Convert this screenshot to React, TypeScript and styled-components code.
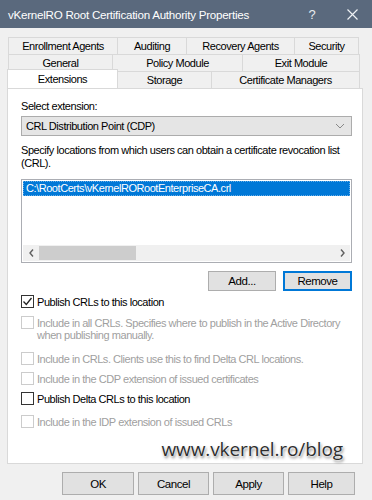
import React from 'react';
import styled, { createGlobalStyle } from 'styled-components';

const GlobalStyle = createGlobalStyle`
  html, body {
    margin: 0;
    padding: 0;
    background: #f0f0f0;
  }
  body {
    font-family: "Liberation Sans", Arial, sans-serif;
    font-size: 11px;
    letter-spacing: -0.45px;
    color: #000;
  }
`;

const Window = styled.div`
  width: 372px;
  height: 500px;
  display: flex;
  flex-direction: column;
  background: #f0f0f0;
  overflow: hidden;
  & * {
    flex-shrink: 0;
  }
`;

const TitleBar = styled.div`
  height: 28px;
  display: flex;
  align-items: center;
  background: #5a697d;
  color: #fff;
  padding-left: 8px;
`;

const Title = styled.span`
  flex: 1;
  font-size: 11.6px;
  letter-spacing: -0.25px;
`;

const TitleButton = styled.span`
  width: 40px;
  display: flex;
  justify-content: center;
  align-items: center;
  font-size: 13px;
  color: #e8ecf0;
`;

const Body = styled.div`
  padding: 9px 9px 0 7px;
  display: flex;
  flex-direction: column;
`;

const TabRow = styled.div<{ $inset?: number }>`
  display: flex;
  height: 17px;
  padding-left: ${(p) => p.$inset ?? 2}px;
  padding-right: ${(p) => p.$inset ?? 2}px;
`;

const Tab = styled.div<{ $w: number; $active?: boolean }>`
  width: ${(p) => p.$w}px;
  box-sizing: border-box;
  display: flex;
  align-items: center;
  justify-content: center;
  border: 1px solid #d9d9d9;
  border-bottom: none;
  margin-left: -1px;
  background: ${(p) => (p.$active ? '#fff' : '#f0f0f0')};
  ${(p) =>
    p.$active &&
    `
    height: 19px;
    margin-top: -2px;
    position: relative;
    z-index: 1;
    margin-left: 0;
  `}
`;

const Panel = styled.div`
  height: 376px;
  box-sizing: border-box;
  background: #fff;
  border: 1px solid #d9d9d9;
  padding: 11px 10px 0 13px;
  display: flex;
  flex-direction: column;
`;

const Label = styled.div<{ $mt?: number }>`
  line-height: 13px;
  margin-top: ${(p) => p.$mt ?? 0}px;
`;

const Combo = styled.div`
  margin-top: 3px;
  height: 20px;
  box-sizing: border-box;
  border: 1px solid #acacac;
  background: #e5e5e5;
  display: flex;
  align-items: center;
  padding: 0 6px 0 4px;
  justify-content: space-between;
`;

const ListBox = styled.div`
  margin-top: 9px;
  height: 84px;
  box-sizing: border-box;
  border: 1px solid #abadb3;
  display: flex;
  flex-direction: column;
  padding: 1px;
`;

const ListItem = styled.div`
  height: 13px;
  line-height: 13px;
  background: #0078d7;
  color: #fff;
  padding-left: 2px;
  border: 1px dotted #66aee8;
`;

const HScroll = styled.div`
  margin-top: auto;
  height: 16px;
  background: #f0f0f0;
  display: flex;
  align-items: center;
`;

const ScrollArrow = styled.div`
  width: 16px;
  display: flex;
  justify-content: center;
  align-items: center;
`;

const ScrollTrack = styled.div`
  flex: 1;
  height: 14px;
  display: flex;
`;

const ScrollThumb = styled.div`
  width: 97px;
  height: 14px;
  background: #cdcdcd;
`;

const ButtonRow = styled.div<{ $mt?: number; $gap?: number }>`
  display: flex;
  justify-content: flex-end;
  gap: ${(p) => p.$gap ?? 7}px;
  margin-top: ${(p) => p.$mt ?? 0}px;
`;

const Button = styled.div<{ $w?: number; $h?: number; $default?: boolean }>`
  width: ${(p) => p.$w ?? 68}px;
  height: ${(p) => p.$h ?? 20}px;
  box-sizing: border-box;
  display: flex;
  align-items: center;
  justify-content: center;
  background: #e1e1e1;
  border: 1px solid ${(p) => (p.$default ? '#0078d7' : '#adadad')};
  box-shadow: ${(p) => (p.$default ? 'inset 0 0 0 1px #0078d7' : 'none')};
  font-size: 11.5px;
`;

const CheckRow = styled.div<{ $mt: number; $disabled?: boolean }>`
  display: flex;
  align-items: flex-start;
  gap: 3px;
  margin-top: ${(p) => p.$mt}px;
  color: ${(p) => (p.$disabled ? '#a0a0a0' : '#000')};
  line-height: 12px;
`;

const Box = styled.div<{ $disabled?: boolean }>`
  width: 13px;
  height: 13px;
  flex: none;
  box-sizing: border-box;
  border: 1px solid ${(p) => (p.$disabled ? '#cccccc' : '#333')};
  background: #fff;
  display: flex;
  align-items: center;
  justify-content: center;
  margin-top: -1px;
`;

const Watermark = styled.div`
  margin-top: 9px;
  align-self: flex-end;
  margin-right: 9px;
  font-family: "Open Sans", "Liberation Sans", sans-serif;
  font-size: 19px;
  line-height: 24px;
  letter-spacing: -0.1px;
  color: #2e2e2e;
  text-shadow: 0 0 2px #fff, 0 0 2px #fff, 1px 2px 3px rgba(0, 0, 0, 0.55);
`;

const Footer = styled.div`
  padding: 8px 8px 0 0;
`;

const Chevron = () => (
  <svg width="10" height="6" viewBox="0 0 10 6">
    <path d="M1 1l4 4 4-4" fill="none" stroke="#888" strokeWidth="1" />
  </svg>
);

const Arrow = ({ dir }: { dir: 'left' | 'right' }) => (
  <svg width="5" height="8" viewBox="0 0 5 8">
    <path
      d={dir === 'left' ? 'M4 0.5L1 4l3 3.5' : 'M1 0.5L4 4 1 7.5'}
      fill="none"
      stroke="#606060"
      strokeWidth="1.4"
    />
  </svg>
);

const Check = () => (
  <svg width="11" height="11" viewBox="0 0 11 11">
    <path d="M1.5 5.5l2.8 3L9.5 2" fill="none" stroke="#222" strokeWidth="1.3" />
  </svg>
);

type Option = {
  label: React.ReactNode;
  checked?: boolean;
  disabled?: boolean;
  mt: number;
};

const options: Option[] = [
  { label: 'Publish CRLs to this location', checked: true, mt: 5 },
  {
    label: (
      <>
        Include in all CRLs. Specifies where to publish in the Active Directory
        <br />
        when publishing manually.
      </>
    ),
    disabled: true,
    mt: 9,
  },
  { label: 'Include in CRLs. Clients use this to find Delta CRL locations.', disabled: true, mt: 12 },
  { label: 'Include in the CDP extension of issued certificates', disabled: true, mt: 8 },
  { label: 'Publish Delta CRLs to this location', mt: 8 },
  { label: 'Include in the IDP extension of issued CRLs', disabled: true, mt: 11 },
];

export default function App() {
  return (
    <Window>
      <GlobalStyle />
      <TitleBar>
        <Title>vKernelRO Root Certification Authority Properties</Title>
        <TitleButton>?</TitleButton>
        <TitleButton>
          <svg width="11" height="11" viewBox="0 0 11 11">
            <path d="M0.5 0.5l10 10M10.5 0.5l-10 10" stroke="#eef1f4" strokeWidth="1.2" />
          </svg>
        </TitleButton>
      </TitleBar>
      <Body>
        <TabRow>
          <Tab $w={110}>Enrollment Agents</Tab>
          <Tab $w={70}>Auditing</Tab>
          <Tab $w={109}>Recovery Agents</Tab>
          <Tab $w={65}>Security</Tab>
        </TabRow>
        <TabRow>
          <Tab $w={105}>General</Tab>
          <Tab $w={131}>Policy Module</Tab>
          <Tab $w={118}>Exit Module</Tab>
        </TabRow>
        <TabRow $inset={0}>
          <Tab $w={111} $active>Extensions</Tab>
          <Tab $w={95}>Storage</Tab>
          <Tab $w={149}>Certificate Managers</Tab>
        </TabRow>
        <Panel>
          <Label>Select extension:</Label>
          <Combo>
            <span>CRL Distribution Point (CDP)</span>
            <Chevron />
          </Combo>
          <Label $mt={8}>
            Specify locations from which users can obtain a certificate revocation list
            <br />
            (CRL).
          </Label>
          <ListBox>
            <ListItem>C:\RootCerts\vKernelRORootEnterpriseCA.crl</ListItem>
            <HScroll>
              <ScrollArrow>
                <Arrow dir="left" />
              </ScrollArrow>
              <ScrollTrack>
                <ScrollThumb />
              </ScrollTrack>
              <ScrollArrow>
                <Arrow dir="right" />
              </ScrollArrow>
            </HScroll>
          </ListBox>
          <ButtonRow $mt={8}>
            <Button>Add...</Button>
            <Button $w={69} $default>
              Remove
            </Button>
          </ButtonRow>
          {options.map((o, i) => (
            <CheckRow key={i} $mt={o.mt} $disabled={o.disabled}>
              <Box $disabled={o.disabled}>{o.checked && <Check />}</Box>
              <span>{o.label}</span>
            </CheckRow>
          ))}
          <Watermark>www.vkernel.ro/blog</Watermark>
        </Panel>
        <Footer>
          <ButtonRow $gap={4}>
            <Button $w={72} $h={23}>OK</Button>
            <Button $w={71} $h={23}>Cancel</Button>
            <Button $w={71} $h={23}>Apply</Button>
            <Button $w={67} $h={23}>Help</Button>
          </ButtonRow>
        </Footer>
      </Body>
    </Window>
  );
}
